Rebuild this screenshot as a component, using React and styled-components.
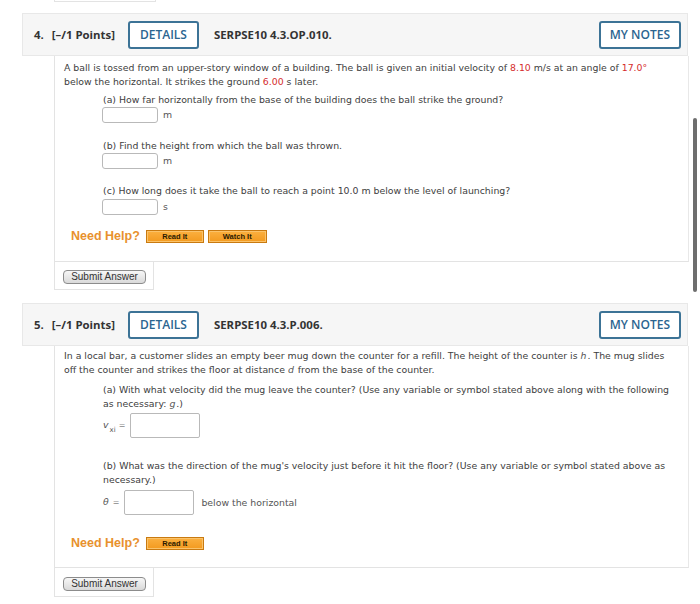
import React from "react";
import styled, { createGlobalStyle } from "styled-components";

const Global = createGlobalStyle`
  html, body { margin: 0; padding: 0; background: #fff; }
  body { width: 700px; height: 604px; overflow: hidden; position: relative; }
`;

const Page = styled.div`
  padding: 0 12px 0 22px;
  font-family: "DejaVu Sans", Verdana, sans-serif;
`;

const PrevTab = styled.div`
  margin-left: 32px;
  width: 100px;
  height: 1px;
  border: 1px solid #e3e3e3;
  border-top: none;
  margin-bottom: 11px;
`;

const Question = styled.section`
  margin-bottom: 13px;
`;

const Header = styled.header`
  display: flex;
  align-items: center;
  height: 41px;
  padding: 0 6px 0 11px;
  background: #f6f6f6;
  border: 1px solid #e8e8e8;
  font-family: "Open Sans", sans-serif;
  font-weight: 700;
  font-size: 11.4px;
  color: #333;
`;

const Num = styled.span`
  margin-right: 8px;
`;

const Points = styled.span`
  margin-right: 13px;
`;

const Code = styled.span`
  margin-left: 15px;
  flex: 1;
`;

const OutlineButton = styled.button`
  height: 28px;
  box-sizing: border-box;
  padding: 0 ${(p) => p.$pad || 10}px;
  border: 2px solid #3c7396;
  border-radius: 3px;
  background: #fff;
  color: #2b6590;
  font-family: "Open Sans", sans-serif;
  font-weight: 600;
  font-size: 12px;
`;

const Body = styled.div`
  margin-left: 32px;
  margin-right: -1px;
  border-left: 1px solid #e3e3e3;
  border-right: 1px solid #e8e8e8;
  border-bottom: 1px solid #e3e3e3;
  padding: ${(p) => p.$pt || 5}px 14px ${(p) => p.$pb || 18}px 9px;
  font-size: 9.35px;
  line-height: 14px;
  color: #404040;
`;

const Para = styled.p`
  margin: 0;
`;

const Red = styled.span`
  color: #d52b2b;
`;

const Part = styled.div`
  margin: ${(p) => p.$mt || 0}px 0 0 39px;
`;

const AnswerRow = styled.div`
  display: flex;
  align-items: center;
  margin-top: ${(p) => p.$mt || 0}px;
  height: ${(p) => p.$h || 16}px;
`;

const Box = styled.div`
  box-sizing: border-box;
  flex: none;
  width: ${(p) => p.$w || 56}px;
  height: ${(p) => p.$h || 16}px;
  border: 1px solid #b9b9b9;
  border-radius: ${(p) => p.$r || 3}px;
  background: #fff;
  margin-left: ${(p) => p.$ml ?? 0}px;
`;

const Unit = styled.span`
  color: #555;
  margin-left: ${(p) => p.$ml || 5}px;
`;

const Var = styled.i`
  font-family: "DejaVu Sans", sans-serif;
  font-style: italic;
  font-size: 9.35px;
  color: #555;
  padding-right: 1px;
`;

const Label = styled.span`
  display: inline-flex;
  align-items: baseline;
  white-space: nowrap;
  color: #555;
`;

const Sub = styled.span`
  font-size: 7px;
  font-family: "DejaVu Sans", sans-serif;
  position: relative;
  top: 4px;
`;

const Eq = styled.span`
  color: #888;
  font-size: 8px;
  margin-left: 3px;
`;

const HelpRow = styled.div`
  display: flex;
  align-items: center;
  margin: ${(p) => p.$mt || 14}px 0 0 7px;
  height: 14px;
`;

const HelpText = styled.span`
  font-family: "Liberation Sans", Arial, sans-serif;
  font-weight: 700;
  font-size: 12.5px;
  color: #e8912d;
  margin-right: 6px;
`;

const HelpButton = styled.button`
  box-sizing: border-box;
  width: ${(p) => p.$w || 58}px;
  height: 13px;
  padding: 0;
  margin-right: 4px;
  border: 1px solid #c97a10;
  box-shadow: inset 0 0 0 1px #fbc36a;
  background: linear-gradient(#fbb040, #f39a1f);
  font-family: "Liberation Sans", Arial, sans-serif;
  font-weight: 700;
  font-size: 7.5px;
  color: #2a1a00;
  line-height: 11px;
`;

const SubmitTab = styled.div`
  margin-left: 32px;
  width: 100px;
  box-sizing: border-box;
  border: 1px solid #e3e3e3;
  border-top: none;
  padding: ${(p) => p.$pt || 8}px 0 5px 8px;
`;

const SubmitButton = styled.button`
  display: block;
  box-sizing: border-box;
  width: 83px;
  height: 14px;
  padding: 0;
  border: 1px solid #8c8c8c;
  border-radius: 4px;
  background: linear-gradient(#f7f7f7, #d9d9d9);
  font-family: "Liberation Sans", Arial, sans-serif;
  font-size: 10px;
  color: #333;
  line-height: 12px;
`;

const Scroll = styled.div`
  position: absolute;
  left: 693px;
  top: 118px;
  width: 4px;
  height: 174px;
  border-radius: 2px;
  background: #6e6e6e;
`;

function QHeader({ n, code }) {
  return (
    <Header>
      <Num>{n}.</Num>
      <Points>[–/1 Points]</Points>
      <OutlineButton>DETAILS</OutlineButton>
      <Code>{code}</Code>
      <OutlineButton $pad={9}>MY NOTES</OutlineButton>
    </Header>
  );
}

export default function App() {
  return (
    <>
      <Global />
      <Page>
        <PrevTab />
        <Question>
          <QHeader n={4} code="SERPSE10 4.3.OP.010." />
          <Body $pt={5} $pb={18}>
            <Para>
              A ball is tossed from an upper-story window of a building. The ball is given an initial velocity of{" "}
              <Red>8.10</Red> m/s at an angle of <Red>17.0°</Red> below the horizontal. It strikes the ground{" "}
              <Red>6.00</Red> s later.
            </Para>
            <Part $mt={4}>
              (a) How far horizontally from the base of the building does the ball strike the ground?
              <AnswerRow>
                <Box $ml={-1} />
                <Unit>m</Unit>
              </AnswerRow>
            </Part>
            <Part $mt={16}>
              (b) Find the height from which the ball was thrown.
              <AnswerRow>
                <Box $ml={-1} />
                <Unit>m</Unit>
              </AnswerRow>
            </Part>
            <Part $mt={15}>
              (c) How long does it take the ball to reach a point 10.0 m below the level of launching?
              <AnswerRow $mt={1}>
                <Box $ml={-1} />
                <Unit>s</Unit>
              </AnswerRow>
            </Part>
            <HelpRow $mt={14}>
              <HelpText>Need Help?</HelpText>
              <HelpButton $w={58}>Read It</HelpButton>
              <HelpButton $w={59}>Watch It</HelpButton>
            </HelpRow>
          </Body>
          <SubmitTab $pt={8}>
            <SubmitButton>Submit Answer</SubmitButton>
          </SubmitTab>
        </Question>

        <Question>
          <QHeader n={5} code="SERPSE10 4.3.P.006." />
          <Body $pt={3} $pb={17}>
            <Para>
              In a local bar, a customer slides an empty beer mug down the counter for a refill. The height of the
              counter is <Var>h</Var>. The mug slides off the counter and strikes the floor at distance <Var>d</Var>{" "}
              from the base of the counter.
            </Para>
            <Part $mt={6}>
              (a) With what velocity did the mug leave the counter? (Use any variable or symbol stated above along
              with the following as necessary: <Var>g</Var>.)
              <AnswerRow $mt={2} $h={25}>
                <Label>
                  <Var>v</Var>
                  <Sub>xi</Sub>
                  <Eq>=</Eq>
                </Label>
                <Box $w={70} $h={25} $r={2} $ml={5} />
              </AnswerRow>
            </Part>
            <Part $mt={21}>
              (b) What was the direction of the mug's velocity just before it hit the floor? (Use any variable or
              symbol stated above as necessary.)
              <AnswerRow $mt={3} $h={25}>
                <Label>
                  <Var>θ</Var>
                  <Eq>=</Eq>
                </Label>
                <Box $w={70} $h={25} $r={2} $ml={5} />
                <Unit $ml={7}>below the horizontal</Unit>
              </AnswerRow>
            </Part>
            <HelpRow $mt={21}>
              <HelpText>Need Help?</HelpText>
              <HelpButton $w={58}>Read It</HelpButton>
            </HelpRow>
          </Body>
          <SubmitTab $pt={9}>
            <SubmitButton>Submit Answer</SubmitButton>
          </SubmitTab>
        </Question>
      </Page>
      <Scroll />
    </>
  );
}
